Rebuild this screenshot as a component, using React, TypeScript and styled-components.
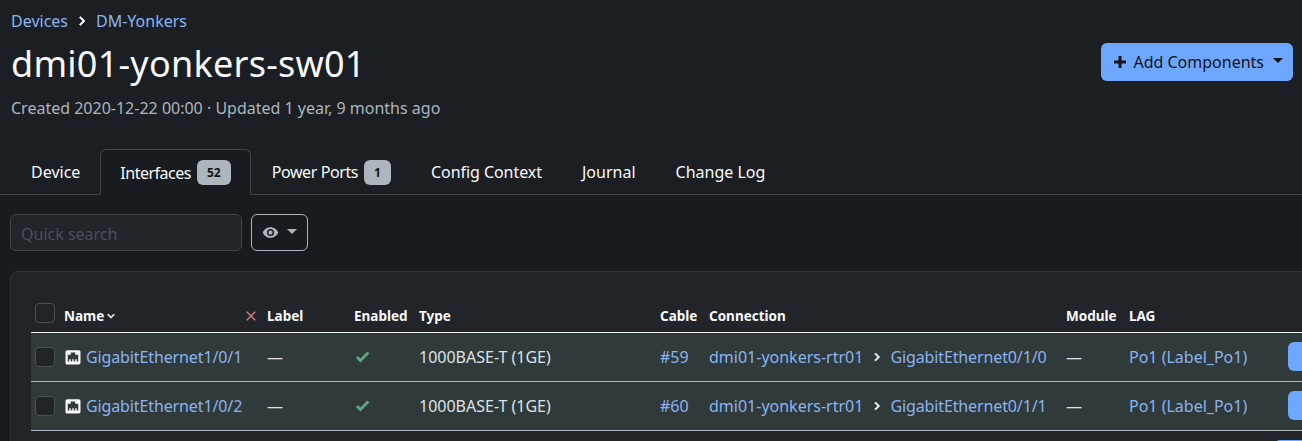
import styled, { createGlobalStyle } from 'styled-components';

const GlobalStyle = createGlobalStyle`
  html, body {
    margin: 0;
    height: 441px;
    overflow: hidden;
    background: #181b1f;
  }
  body {
    font-family: "Noto Sans", "Open Sans", sans-serif;
    font-size: 16px;
    color: #f8f9fa;
  }
  * {
    box-sizing: border-box;
  }
`;

const LINK = '#8ab4f0';

const Page = styled.div`
  width: 1302px;
  height: 441px;
  overflow: hidden;
`;

const Header = styled.header`
  background: #1b1f23;
  height: 195px;
  display: flex;
  flex-direction: column;
  justify-content: space-between;
  border-bottom: 1px solid #41464b;
`;

const HeaderTop = styled.div`
  display: flex;
  justify-content: space-between;
  padding: 10px 9px 0 10px;
`;

const Breadcrumbs = styled.nav`
  display: flex;
  align-items: center;
  gap: 5px;
  height: 22px;
  padding-left: 1px;
  color: ${LINK};
`;

const Title = styled.h1`
  margin: 8px 0 0;
  padding-left: 1px;
  font-size: 36px;
  line-height: 48px;
  font-weight: 400;
  letter-spacing: 0.25px;
  color: #f8f9fa;
`;

const Subtitle = styled.div`
  margin-top: 10px;
  line-height: 20px;
  color: #adb5bd;
  padding-left: 1px;
`;

const AddButton = styled.button`
  display: flex;
  align-items: center;
  gap: 4px;
  height: 38px;
  margin-top: 33px;
  padding: 0 10px;
  border: none;
  border-radius: 6px;
  background: #6ea8fe;
  color: #111418;
  font: inherit;
`;

const Caret = styled.span<{ $gap: number }>`
  width: 0;
  height: 0;
  margin-left: ${(p) => p.$gap}px;
  margin-top: -3px;
  border-left: 5px solid transparent;
  border-right: 5px solid transparent;
  border-top: 5px solid currentColor;
`;

const Tabs = styled.ul`
  display: flex;
  list-style: none;
  margin: 0 0 -1px;
  padding: 0 0 0 11px;
`;

const Tab = styled.li<{ $active?: boolean; $shift?: number }>`
  display: flex;
  align-items: center;
  gap: 6px;
  height: 46px;
  margin-left: ${(p) => p.$shift ?? 0}px;
  padding: ${(p) => (p.$active ? '1px 19px 0' : '0 19px')};
  white-space: nowrap;
  border: 1px solid ${(p) => (p.$active ? '#41464b' : 'transparent')};
  border-bottom-color: ${(p) => (p.$active ? '#181b1f' : 'transparent')};
  border-radius: 6px 6px 0 0;
  background: ${(p) => (p.$active ? '#181b1f' : 'transparent')};
`;

const TabLabel = styled.span<{ $tight: number }>`
  letter-spacing: ${(p) => p.$tight}px;
`;

const Badge = styled.span`
  display: inline-flex;
  align-items: center;
  justify-content: center;
  height: 25px;
  min-width: 26px;
  padding: 0 10px;
  border-radius: 6px;
  background: #adb5bd;
  color: #111418;
  font-size: 12px;
  font-weight: 700;
`;

const Controls = styled.div`
  display: flex;
  gap: 9px;
  padding: 19px 10px 0;
`;

const Search = styled.input`
  width: 232px;
  height: 37px;
  padding: 2px 10px 0;
  border: 1px solid #41464b;
  border-radius: 6px;
  background: #212529;
  font: inherit;
  &::placeholder {
    color: #495057;
  }
`;

const EyeButton = styled.button`
  display: flex;
  align-items: center;
  gap: 4px;
  width: 57px;
  height: 37px;
  padding: 0 0 0 10px;
  border: 1px solid #adb5bd;
  border-radius: 6px;
  background: transparent;
  color: #adb5bd;
`;

const Card = styled.section`
  margin: 20px 0 0 10px;
  width: 1330px;
  height: 200px;
  padding: 20px 20px 0;
  background: #212529;
  border: 1px solid #2f3338;
  border-radius: 8px 0 0 0;
`;

const Table = styled.table`
  border-collapse: collapse;
  table-layout: fixed;
  width: 1285px;
`;

const Th = styled.th<{ $w: number }>`
  width: ${(p) => p.$w}px;
  height: 40px;
  padding: 9px 0 0 4px;
  text-align: left;
  vertical-align: middle;
  font-size: 13.5px;
  font-weight: 700;
  white-space: nowrap;
  border-bottom: 1px solid #f1f3f5;
`;

const Tr = styled.tr<{ $tinted?: boolean }>`
  height: 49px;
  background: ${(p) => (p.$tinted ? '#303a3a' : 'transparent')};
  border-bottom: 1px solid ${(p) => (p.$tinted ? '#adb5bd' : 'transparent')};
`;

const Td = styled.td`
  padding: 0 0 0 4px;
  white-space: nowrap;
  vertical-align: middle;
  color: #dee2e6;
`;

const A = styled.a`
  color: ${LINK};
  text-decoration: none;
`;

const IfaceLink = styled(A)`
  letter-spacing: -0.12px;
`;

const Check = styled.span<{ $head?: boolean }>`
  display: block;
  width: 20px;
  height: 20px;
  margin-top: ${(p) => (p.$head ? '-7px' : '0')};
  border: 1px solid #495057;
  border-radius: 4px;
  background: #212529;
`;

const NameHead = styled.span`
  display: flex;
  align-items: center;
  justify-content: space-between;
  padding-right: 4px;
`;

const NameSort = styled.span`
  display: flex;
  align-items: center;
`;

const Icon = styled.svg<{ $color?: string; $size?: number; $bold?: boolean }>`
  flex: none;
  display: inline-block;
  vertical-align: -0.15em;
  width: ${(p) => p.$size ?? 16}px;
  height: ${(p) => p.$size ?? 16}px;
  fill: ${(p) => p.$color ?? 'currentColor'};
  stroke: ${(p) => (p.$bold ? p.$color ?? 'currentColor' : 'none')};
  stroke-width: 1;
`;

const NameCell = styled.span`
  display: flex;
  align-items: center;
  gap: 4px;
`;

const Conn = styled.span`
  display: flex;
  align-items: center;
  gap: 5.5px;
`;

const Actions = styled.span<{ $offset: number }>`
  display: block;
  width: 40px;
  height: 29px;
  margin-left: ${(p) => p.$offset}px;
  border-radius: 6px;
  background: #6ea8fe;
`;

const paths = {
  ethernet:
    'M7,15H9V18H11V15H13V18H15V15H17V18H19V9H15V6H9V9H5V18H7V15M4.38,3H19.63C20.94,3 22,4.06 22,5.38V19.63A2.37,2.37 0 0,1 19.63,22H4.38C3.06,22 2,20.94 2,19.63V5.38C2,4.06 3.06,3 4.38,3Z',
  eye: 'M12,9A3,3 0 0,0 9,12A3,3 0 0,0 12,15A3,3 0 0,0 15,12A3,3 0 0,0 12,9M12,17A5,5 0 0,1 7,12A5,5 0 0,1 12,7A5,5 0 0,1 17,12A5,5 0 0,1 12,17M12,4.5C7,4.5 2.73,7.61 1,12C2.73,16.39 7,19.5 12,19.5C17,19.5 21.27,16.39 23,12C21.27,7.61 17,4.5 12,4.5Z',
  check: 'M9,20.42L2.79,14.21L5.62,11.38L9,14.77L18.88,4.88L21.71,7.71L9,20.42Z',
  plus: 'M20 14H14V20H10V14H4V10H10V4H14V10H20V14Z',
  close:
    'M19,6.41L17.59,5L12,10.59L6.41,5L5,6.41L10.59,12L5,17.59L6.41,19L12,13.41L17.59,19L19,17.59L13.41,12L19,6.41Z',
  chevronRight: 'M8.59,16.58L13.17,12L8.59,7.41L10,6L16,12L10,18L8.59,16.58Z',
  chevronDown: 'M7.41,8.58L12,13.17L16.59,8.58L18,10L12,16L6,10L7.41,8.58Z',
};

const Mdi = ({ d, color, size, bold }: { d: string; color?: string; size?: number; bold?: boolean }) => (
  <Icon viewBox="0 0 24 24" $color={color} $size={size} $bold={bold}>
    <path d={d} />
  </Icon>
);

const columns = [
  { label: '', w: 29 },
  { label: 'Name', w: 203 },
  { label: 'Label', w: 87 },
  { label: 'Enabled', w: 65 },
  { label: 'Type', w: 241 },
  { label: 'Cable', w: 49 },
  { label: 'Connection', w: 357 },
  { label: 'Module', w: 63 },
  { label: 'LAG', w: 150 },
  { label: '', w: 41 },
];

const rows = [
  { name: 'GigabitEthernet1/0/1', cable: '#59', peer: 'GigabitEthernet0/1/0' },
  { name: 'GigabitEthernet1/0/2', cable: '#60', peer: 'GigabitEthernet0/1/1' },
];

export default function App() {
  return (
    <Page>
      <GlobalStyle />
      <Header>
        <HeaderTop>
          <div>
            <Breadcrumbs>
              <span>Devices</span>
              <Mdi d={paths.chevronRight} color="#f8f9fa" size={18} bold />
              <span>DM-Yonkers</span>
            </Breadcrumbs>
            <Title>dmi01-yonkers-sw01</Title>
            <Subtitle>Created 2020-12-22 00:00 · Updated 1 year, 9 months ago</Subtitle>
          </div>
          <AddButton>
            <Mdi d={paths.plus} size={18} />
            Add Components
            <Caret $gap={5} />
          </AddButton>
        </HeaderTop>
        <Tabs>
          <Tab>Device</Tab>
          <Tab $active>
            <TabLabel $tight={-0.5}>Interfaces</TabLabel>
            <Badge>52</Badge>
          </Tab>
          <Tab $shift={1}>
            <TabLabel $tight={-0.4}>Power Ports</TabLabel>
            <Badge>1</Badge>
          </Tab>
          <Tab>
            <TabLabel $tight={-0.05}>Config Context</TabLabel>
          </Tab>
          <Tab>Journal</Tab>
          <Tab>Change Log</Tab>
        </Tabs>
      </Header>
      <Controls>
        <Search placeholder="Quick search" />
        <EyeButton>
          <Mdi d={paths.eye} size={17} />
          <Caret $gap={4} />
        </EyeButton>
      </Controls>
      <Card>
        <Table>
          <thead>
            <tr>
              {columns.map((c, i) => (
                <Th key={i} $w={c.w}>
                  {i === 0 && <Check $head />}
                  {i === 1 ? (
                    <NameHead>
                      <NameSort>
                        Name
                        <Mdi d={paths.chevronDown} size={14} bold />
                      </NameSort>
                      <Mdi d={paths.close} color="#dc7f86" size={16} />
                    </NameHead>
                  ) : (
                    c.label
                  )}
                </Th>
              ))}
            </tr>
          </thead>
          <tbody>
            {rows.map((r) => (
              <Tr $tinted key={r.name}>
                <Td>
                  <Check />
                </Td>
                <Td>
                  <NameCell>
                    <Mdi d={paths.ethernet} color="#f8f9fa" size={18} />
                    <IfaceLink href="#">{r.name}</IfaceLink>
                  </NameCell>
                </Td>
                <Td>—</Td>
                <Td>
                  <Mdi d={paths.check} color="#63a583" size={17} />
                </Td>
                <Td>1000BASE-T (1GE)</Td>
                <Td>
                  <A href="#">{r.cable}</A>
                </Td>
                <Td>
                  <Conn>
                    <A href="#">dmi01-yonkers-rtr01</A>
                    <Mdi d={paths.chevronRight} color="#f8f9fa" size={16} bold />
                    <IfaceLink href="#">{r.peer}</IfaceLink>
                  </Conn>
                </Td>
                <Td>—</Td>
                <Td>
                  <A href="#">Po1 (Label_Po1)</A>
                </Td>
                <Td>
                  <Actions $offset={9} />
                </Td>
              </Tr>
            ))}
            <Tr>
              <Td colSpan={9} />
              <Td>
                <Actions $offset={-5} />
              </Td>
            </Tr>
          </tbody>
        </Table>
      </Card>
    </Page>
  );
}
